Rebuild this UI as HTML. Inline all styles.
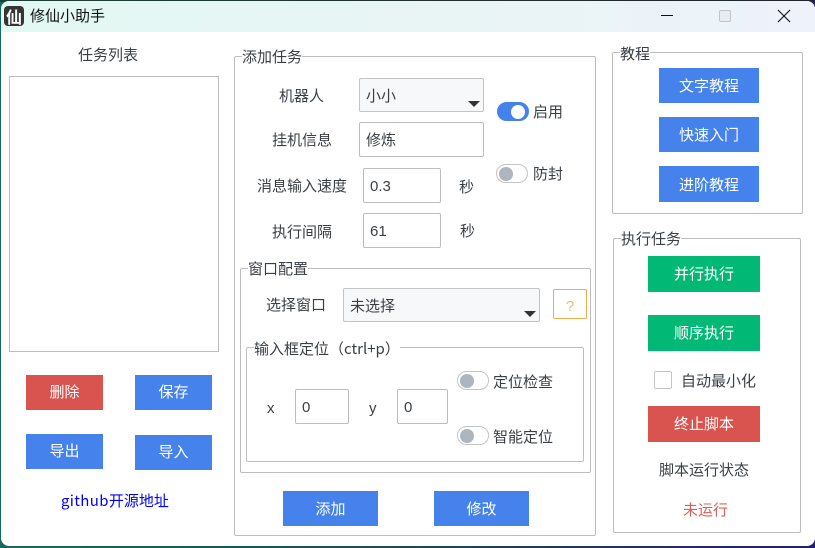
<!DOCTYPE html>
<html><head><meta charset="utf-8"><style>
*{box-sizing:border-box}
html,body{margin:0;padding:0;width:815px;height:548px;overflow:hidden}
body{position:relative;background:linear-gradient(90deg,#17695f 0%,#1a4a58 50%,#231f6b 100%);font-family:"Liberation Sans","Noto Sans CJK SC",sans-serif;font-size:15px;color:#3a3f45}
#top{position:absolute;left:0;top:0;width:815px;height:2px;background:linear-gradient(90deg,#1d3f36,#23242a)}
#win{position:absolute;left:1px;top:1px;width:814px;height:545px;background:#fff;border-radius:8px;overflow:hidden}
.a{position:absolute}
.t{position:absolute;line-height:20px;height:20px;white-space:nowrap;background:transparent}
.g{position:absolute;border:1px solid #bdbdbd;border-radius:2px;background:#fff}
.b{position:absolute;color:#fff;text-align:center;background:#4582ec}
.r{background:#d9534f}.gr{background:#02b875}
.i{position:absolute;border:1px solid #bdbdbd;border-radius:2px;background:#fff;padding-left:6px;color:#3a3f45}
.c{position:absolute;border:1px solid #c4c4c4;border-radius:2px;background:#f7f8fa;padding-left:6px;color:#3a3f45}
.ar{position:absolute;width:0;height:0;border-left:6px solid transparent;border-right:6px solid transparent;border-top:6px solid #333}
.tg{position:absolute;width:32px;height:19px;border:1px solid #c4c4c4;border-radius:10px;background:#fff}
.tg i{position:absolute;left:2px;top:2px;width:14px;height:14px;border-radius:50%;background:#adb5bd}
.on{background:#4582ec;border-color:#4582ec}
.on i{left:13px;background:#fff}
.w{background:#fff;padding:0}
.n{font-family:"Noto Sans CJK SC",sans-serif}
</style></head><body>
<div id="top"></div>
<div id="win"></div>
<div class="a" style="left:1px;top:1px;width:814px;height:31px;background:linear-gradient(90deg,#e2f8f3 0%,#e8f5f4 50%,#eef2fb 100%);border-radius:8px 8px 0 0"></div>

<div class="a" style="left:4px;top:6px;width:20px;height:20px;background:#353535;border-radius:4px;color:#fff;font:bold 16px/20px 'Noto Sans CJK SC',sans-serif;text-align:center">仙</div>
<div class="t" style="left:30px;top:7px;color:#111">修仙小助手</div>
<div class="a" style="left:661px;top:15px;width:12px;height:1px;background:#111"></div>
<div class="a" style="left:719px;top:10px;width:12px;height:12px;border:1px solid #c0c3c8;border-radius:2px;background:#e9ecf2"></div>
<svg class="a" style="left:777px;top:9px" width="14" height="14" viewBox="0 0 14 14"><path d="M1 1L13 13M13 1L1 13" stroke="#111" stroke-width="1.1" fill="none"/></svg>

<div class="t" style="left:78px;top:46px">任务列表</div>
<div class="a" style="left:9px;top:76px;width:210px;height:276px;border:1px solid #bdbdbd;background:#fff"></div>
<div class="b r" style="left:26px;top:375px;width:77px;height:35px;line-height:35px">删除</div>
<div class="b" style="left:135px;top:375px;width:77px;height:35px;line-height:36px">保存</div>
<div class="b" style="left:26px;top:434px;width:77px;height:35px;line-height:35px">导出</div>
<div class="b" style="left:135px;top:435px;width:77px;height:35px;line-height:36px">导入</div>
<div class="t n" style="left:61px;top:491px;color:#0000ff"><span style="letter-spacing:.35px">github</span>开源地址</div>

<div class="g" style="left:234px;top:56px;width:362px;height:480px"></div>
<div class="t w" style="left:242px;top:48px">添加任务</div>
<div class="t" style="left:279px;top:87px">机器人</div>
<div class="c" style="left:359px;top:78px;width:125px;height:34px;line-height:36px">小小</div>
<div class="ar" style="left:468px;top:101px"></div>
<div class="t" style="left:272px;top:131px">挂机信息</div>
<div class="i" style="left:359px;top:122px;width:125px;height:35px;line-height:35px">修炼</div>
<div class="t" style="left:257px;top:177px">消息输入速度</div>
<div class="i" style="left:363px;top:168px;width:78px;height:35px;line-height:35px">0.3</div>
<div class="t" style="left:459px;top:178px">秒</div>
<div class="t" style="left:272px;top:223px">执行间隔</div>
<div class="i" style="left:363px;top:213px;width:78px;height:35px;line-height:35px">61</div>
<div class="t" style="left:460px;top:222px">秒</div>
<div class="tg on" style="left:497px;top:102px"><i></i></div>
<div class="t" style="left:533px;top:103px">启用</div>
<div class="tg" style="left:496px;top:164px"><i></i></div>
<div class="t" style="left:533px;top:165px">防封</div>

<div class="g" style="left:240px;top:268px;width:351px;height:205px"></div>
<div class="t w" style="left:248px;top:260px">窗口配置</div>
<div class="t" style="left:266px;top:296px">选择窗口</div>
<div class="c" style="left:343px;top:288px;width:197px;height:34px;line-height:35px">未选择</div>
<div class="ar" style="left:524px;top:311px"></div>
<div class="a" style="left:553px;top:289px;width:34px;height:30px;border:1px solid #f0ad4e;border-radius:2px;color:#f5b76c;text-align:center;line-height:34px;font-size:15px;background:#fff">?</div>

<div class="g" style="left:246px;top:347px;width:338px;height:115px"></div>
<div class="t w n" style="left:254px;top:339px">输入框定位（ctrl+p）</div>
<div class="t" style="left:267px;top:399px">x</div>
<div class="i" style="left:295px;top:389px;width:54px;height:35px;line-height:35px">0</div>
<div class="t" style="left:369px;top:399px">y</div>
<div class="i" style="left:397px;top:389px;width:51px;height:35px;line-height:35px">0</div>
<div class="tg" style="left:457px;top:371px"><i></i></div>
<div class="t" style="left:493px;top:373px">定位检查</div>
<div class="tg" style="left:457px;top:426px"><i></i></div>
<div class="t" style="left:493px;top:428px">智能定位</div>

<div class="b" style="left:283px;top:491px;width:95px;height:35px;line-height:37px">添加</div>
<div class="b" style="left:434px;top:491px;width:95px;height:35px;line-height:37px">修改</div>

<div class="g" style="left:612px;top:52px;width:191px;height:162px"></div>
<div class="t w" style="left:620px;top:45px">教程</div>
<div class="b" style="left:659px;top:68px;width:100px;height:35px;line-height:37px">文字教程</div>
<div class="b" style="left:659px;top:117px;width:100px;height:35px;line-height:37px">快速入门</div>
<div class="b" style="left:659px;top:166px;width:100px;height:36px;line-height:39px">进阶教程</div>

<div class="g" style="left:613px;top:238px;width:188px;height:295px"></div>
<div class="t w" style="left:621px;top:230px">执行任务</div>
<div class="b gr" style="left:648px;top:256px;width:112px;height:36px;line-height:38px">并行执行</div>
<div class="b gr" style="left:648px;top:315px;width:112px;height:36px;line-height:38px">顺序执行</div>
<div class="a" style="left:654px;top:371px;width:18px;height:18px;border:1px solid #c4c4c4;border-radius:2px;background:#fff"></div>
<div class="t" style="left:681px;top:372px">自动最小化</div>
<div class="b r" style="left:648px;top:406px;width:112px;height:36px;line-height:38px">终止脚本</div>
<div class="t" style="left:659px;top:461px">脚本运行状态</div>
<div class="t" style="left:683px;top:501px;color:#dc5f5b">未运行</div>
</body></html>
